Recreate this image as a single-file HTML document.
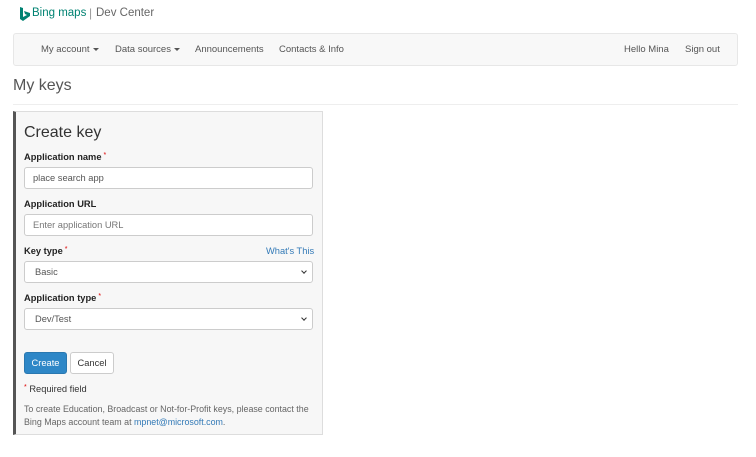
<!DOCTYPE html>
<html><head><style>
*{box-sizing:border-box;margin:0;padding:0}
body{width:756px;height:457px;background:#fff;font-family:"Liberation Sans",Arial,sans-serif;color:#333;position:relative;overflow:hidden}
.a{position:absolute}
.nav{left:13px;top:33px;width:725px;height:33px;background:#f8f8f8;border:1px solid #e7e7e7;border-radius:3px}
.ni{font-size:9.5px;color:#555;top:44px}
.car{display:inline-block;border-top:3px solid #555;border-left:3px solid transparent;border-right:3px solid transparent;vertical-align:middle;margin-left:3px}
.panel{left:13px;top:111px;width:310px;height:324px;background:#f7f7f7;border:1px solid #ddd;border-left:3px solid #555}
.lbl{font-size:9.3px;font-weight:bold;color:#222;left:24px}
.req{color:#d00;font-size:7px;vertical-align:top;font-weight:normal;margin-left:2px}
.inp{left:24px;width:289px;height:22px;background:#fff;border:1px solid #ccc;border-radius:3px;font-size:9.3px;color:#555;padding:5px 8px}
.chev{position:absolute;right:6px;top:7px;width:4px;height:4px;border-right:1.3px solid #333;border-bottom:1.3px solid #333;transform:rotate(45deg)}
</style></head><body>
<svg class="a" style="left:19px;top:7px" width="11" height="14" viewBox="0 0 11 14"><path d="M1 0l3 1v9l4-2-2-1-1-3 6 2v3l-7 5-3-2z" fill="#008272"/></svg>
<div class="a" style="left:32px;top:7px;font-size:11.5px;color:#008272">Bing maps</div>
<div class="a" style="left:89px;top:6px;font-size:12px;color:#999">|</div>
<div class="a" style="left:96px;top:7px;font-size:11.5px;color:#666">Dev Center</div>
<div class="a nav"></div>
<div class="a ni" style="left:41px">My account<span class="car"></span></div>
<div class="a ni" style="left:115px">Data sources<span class="car"></span></div>
<div class="a ni" style="left:195px">Announcements</div>
<div class="a ni" style="left:279px">Contacts &amp; Info</div>
<div class="a ni" style="left:624px">Hello Mina</div>
<div class="a ni" style="left:685px">Sign out</div>
<div class="a" style="left:13px;top:77px;font-size:16px;color:#555">My keys</div>
<div class="a" style="left:13px;top:104px;width:725px;height:1px;background:#eee"></div>
<div class="a panel"></div>
<div class="a" style="left:24px;top:124px;font-size:16px;color:#333">Create key</div>
<div class="a lbl" style="top:152px">Application name<span class="req">*</span></div>
<div class="a inp" style="top:167px">place search app</div>
<div class="a lbl" style="top:199px">Application URL</div>
<div class="a inp" style="top:214px;color:#777">Enter application URL</div>
<div class="a lbl" style="top:246px">Key type<span class="req">*</span></div>
<div class="a" style="left:266px;top:246px;font-size:9.3px;color:#337ab7">What's This</div>
<div class="a inp" style="top:261px;padding-left:10px">Basic<span class="chev"></span></div>
<div class="a lbl" style="top:293px">Application type<span class="req">*</span></div>
<div class="a inp" style="top:308px;padding-left:10px">Dev/Test<span class="chev"></span></div>
<div class="a" style="left:24px;top:352px;width:43px;height:22px;background:#2e87c7;border:1px solid #2a78b0;border-radius:3px;color:#fff;font-size:9.3px;text-align:center;line-height:20px">Create</div>
<div class="a" style="left:70px;top:352px;width:44px;height:22px;background:#fff;border:1px solid #ccc;border-radius:3px;color:#333;font-size:9.3px;text-align:center;line-height:20px">Cancel</div>
<div class="a" style="left:24px;top:384px;font-size:9.3px;color:#333"><span style="color:#d00;font-size:7px;vertical-align:top">*</span> Required field</div>
<div class="a" style="left:24px;top:403px;font-size:8.9px;color:#666;line-height:13px;width:298px">To create Education, Broadcast or Not-for-Profit keys, please contact the Bing Maps account team at <span style="color:#337ab7">mpnet@microsoft.com</span>.</div>
</body></html>
